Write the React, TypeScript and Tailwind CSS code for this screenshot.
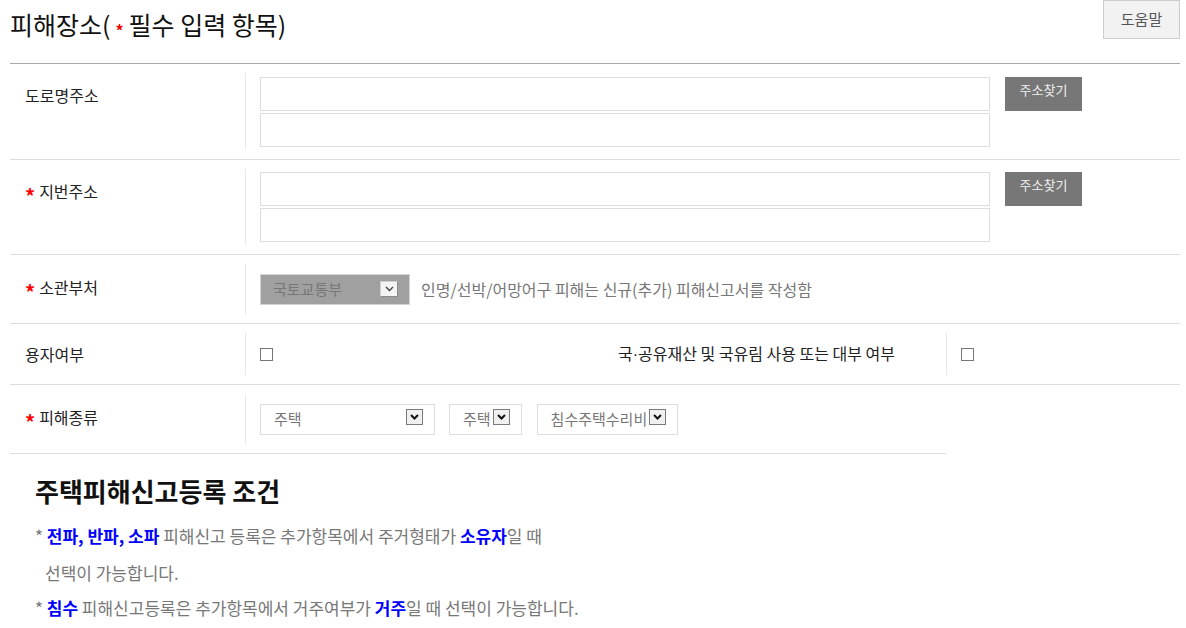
import type { ReactNode } from 'react';

function Req() {
  return <span className="mr-[4px] align-[-6px] text-[20px] font-bold text-[#ff0000]">*</span>;
}

function Arrow({ flat }: { flat?: boolean }) {
  return (
    <span
      className={
        flat
          ? 'flex h-[16px] w-[18px] shrink-0 items-center justify-center border border-[#d0d0d0] border-r-[#8a8a8a] border-b-[#8a8a8a] bg-[#f4f4f4]'
          : 'mb-[4px] flex h-[16px] w-[17px] shrink-0 items-center justify-center border border-[#7a7a7a] bg-[#f0f0f0]'
      }
    >
      <svg width="9" height="6" viewBox="0 0 9 6" fill="none">
        <path d="M1 1l3.5 3.5L8 1" stroke={flat ? '#444' : '#111'} strokeWidth={flat ? 1.4 : 2} />
      </svg>
    </span>
  );
}

function Select({ text, className }: { text: string; className?: string }) {
  return (
    <div
      className={`flex h-[31px] items-center border border-[#dddddd] bg-white pl-[13px] pr-[11px] text-[15px] text-[#777] ${className ?? ''}`}
    >
      <span className="flex-1 whitespace-nowrap">{text}</span>
      <span className="ml-[2px]">
        <Arrow />
      </span>
    </div>
  );
}

function Checkbox() {
  return <span className="block h-[13px] w-[13px] border border-[#777] bg-white" />;
}

function Label({ children, required, top }: { children: ReactNode; required?: boolean; top?: boolean }) {
  return (
    <div
      className={`flex w-[235px] shrink-0 pl-[15px] text-[16px] leading-[22px] text-[#222] ${
        top ? 'items-start pt-[11px]' : 'items-center'
      }`}
    >
      <span>
        {required && <Req />}
        {children}
      </span>
    </div>
  );
}

function AddressRow({ label, required, pad }: { label: string; required?: boolean; pad: string }) {
  return (
    <div className="flex border-b border-[#dddddd] pt-[9px] pb-[9px]">
      <Label required={required} top>
        {label}
      </Label>
      <div className={`flex flex-1 border-l border-[#e8e8e8] pl-[14px] ${pad}`}>
        <div className="flex w-[730px] flex-col gap-[2px]">
          <input className="h-[34px] border border-[#dddddd] bg-white outline-none" />
          <input className="h-[34px] border border-[#dddddd] bg-white outline-none" />
        </div>
        <button className="ml-[15px] flex h-[34px] w-[77px] items-start justify-center self-start bg-[#777777] pt-[4px] text-[13px] leading-[18px] text-[#f0f0f0]">
          주소찾기
        </button>
      </div>
    </div>
  );
}

export default function App() {
  return (
    <div className="ml-[10px] w-[1170px] font-['Noto_Sans_CJK_KR','Noto_Sans',sans-serif]">
      <div className="flex h-[63px] items-start justify-between">
        <h2 className="pt-[7px] text-[25px] leading-[34px] font-normal text-[#111]">
          피해장소(
          <span className="mx-[5px] align-[-2px] text-[16px] font-bold text-[#ee0000]">*</span>
          필수 입력 항목)
        </h2>
        <button className="h-[39px] w-[77px] border border-[#cccccc] bg-[#f2f2f2] text-[15px] text-[#555]">
          도움말
        </button>
      </div>

      <div className="border-t border-[#a8a8a8]">
        <AddressRow label="도로명주소" pad="pt-[4px] pb-[3px]" />
        <AddressRow label="지번주소" required pad="pt-[3px] pb-[3px]" />

        <div className="flex border-b border-[#dddddd] pt-[9px] pb-[9px]">
          <Label required>소관부처</Label>
          <div className="flex h-[50px] flex-1 items-center gap-[11px] border-l border-[#e8e8e8] pl-[14px]">
            <div className="flex h-[31px] w-[150px] items-center border border-[#d4d4d4] bg-[#a0a0a0] pl-[12px] pr-[11px] text-[15px] text-[#777]">
              <span className="flex-1">국토교통부</span>
              <Arrow flat />
            </div>
            <span className="text-[16px] text-[#777]">인명/선박/어망어구 피해는 신규(추가) 피해신고서를 작성함</span>
          </div>
        </div>

        <div className="flex border-b border-[#dddddd] pt-[9px] pb-[9px]">
          <Label>용자여부</Label>
          <div className="flex h-[42px] flex-1 items-center border-l border-[#e8e8e8] pl-[14px]">
            <Checkbox />
          </div>
          <div className="flex items-center pr-[51px] text-[16px] text-[#222]">
            <span>
              국<span className="font-['Liberation_Sans',sans-serif]">·</span>공유재산 및 국유림 사용 또는 대부 여부
            </span>
          </div>
          <div className="flex w-[234px] items-center border-l border-[#e8e8e8] pl-[14px]">
            <Checkbox />
          </div>
        </div>

        <div className="flex w-[936px] border-b border-[#dddddd] pt-[9px] pb-[9px]">
          <Label required>피해종류</Label>
          <div className="flex h-[50px] flex-1 items-center border-l border-[#e8e8e8] pl-[14px]">
            <Select text="주택" className="w-[175px]" />
            <Select text="주택" className="ml-[14px]" />
            <Select text="침수주택수리비" className="ml-[15px]" />
          </div>
        </div>
      </div>

      <div className="pl-[25px] pt-[19px]">
        <h3 className="text-[26px] leading-[36px] font-bold text-[#111]">주택피해신고등록 조건</h3>
        <p className="mt-[8px] text-[17px] leading-[37px] text-[#777]">
          * <b className="text-[17px] text-[#0000ff]">전파, 반파, 소파</b> 피해신고 등록은 추가항목에서 주거형태가{' '}
          <b className="text-[17px] text-[#0000ff]">소유자</b>일 때
          <br />
          <span className="pl-[10px]">선택이 가능합니다.</span>
        </p>
        <p className="text-[17px] leading-[34px] text-[#777]">
          * <b className="text-[17px] text-[#0000ff]">침수</b> 피해신고등록은 추가항목에서 거주여부가{' '}
          <b className="text-[17px] text-[#0000ff]">거주</b>일 때 선택이 가능합니다.
        </p>
      </div>
    </div>
  );
}
